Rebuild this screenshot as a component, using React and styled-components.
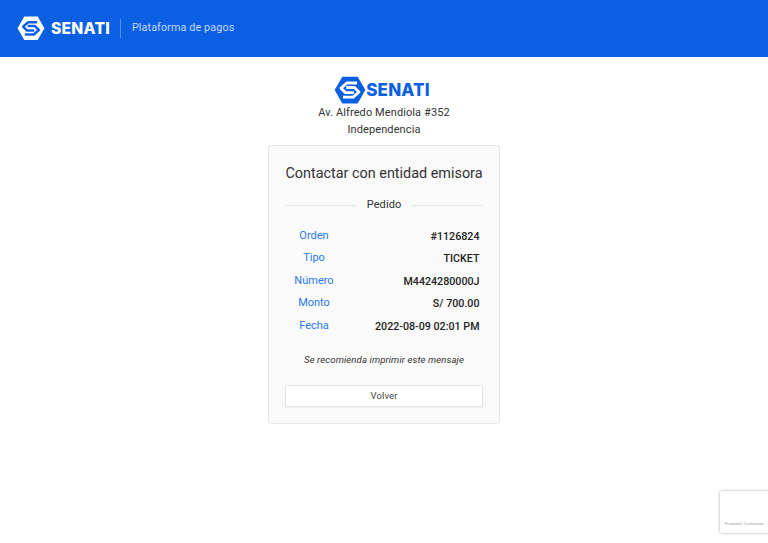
import styled, { createGlobalStyle } from "styled-components";

const GlobalStyle = createGlobalStyle`
  html, body {
    margin: 0;
    padding: 0;
    background: #fff;
    font-family: Roboto, "Liberation Sans", sans-serif;
  }
`;

const Page = styled.div`
  height: 543px;
  overflow: hidden;
  position: relative;
`;

const Header = styled.header`
  height: 57px;
  background: #0b5fe3;
  display: flex;
  align-items: center;
  padding-left: 17px;
`;

const BrandName = styled.span`
  font-family: Inter, Roboto, sans-serif;
  font-weight: 800;
  font-size: ${(p) => p.$size}px;
  letter-spacing: 0.2px;
  color: ${(p) => p.$color};
  line-height: 1;
`;

const HeaderBrand = styled.div`
  display: flex;
  align-items: center;
  gap: 6px;
`;

const Divider = styled.div`
  width: 1px;
  height: 19px;
  background: rgba(255, 255, 255, 0.3);
  margin: 0 11px 0 10px;
`;

const Tagline = styled.span`
  font-size: 10.8px;
  letter-spacing: 0.1px;
  color: #c4d8f8;
  position: relative;
  top: -1px;
`;

const Main = styled.main`
  display: flex;
  flex-direction: column;
  align-items: center;
  padding-top: 20px;
`;

const Logo = styled.div`
  display: flex;
  align-items: center;
  height: 27px;
  margin-right: 4px;
`;

const Address = styled.p`
  margin: 0;
  font-size: 11px;
  line-height: 17px;
  letter-spacing: 0.1px;
  color: #333;
  text-align: center;
`;

const Card = styled.section`
  box-sizing: border-box;
  width: 232px;
  height: 279px;
  margin-top: 7px;
  padding: 17px 16px 0;
  background: #fafafa;
  border: 1px solid #e6e6e6;
  border-radius: 3px;
`;

const Title = styled.h1`
  margin: 0;
  font-size: 14.4px;
  font-weight: 400;
  line-height: 21px;
  text-align: center;
  color: #333;
  white-space: nowrap;
`;

const Section = styled.div`
  display: flex;
  align-items: center;
  gap: 11px;
  margin-top: 13px;
  font-size: 11px;
  line-height: 16px;
  letter-spacing: 0.1px;
  color: #333;
  &::before,
  &::after {
    content: "";
    flex: 1;
    height: 1px;
    background: #e8e8e8;
  }
`;

const Rows = styled.dl`
  margin: 12px 0 0;
`;

const Row = styled.div`
  display: flex;
  justify-content: space-between;
  align-items: center;
  height: 22.5px;
  padding-right: 3.5px;
`;

const Label = styled.dt`
  width: 58px;
  text-align: center;
  font-size: 11px;
  color: #2b78f0;
  position: relative;
  top: -1px;
`;

const Value = styled.dd`
  margin: 0;
  font-size: 10.7px;
  font-weight: 500;
  color: #222;
  white-space: nowrap;
`;

const Note = styled.p`
  margin: 15px 0 0;
  font-size: 9.6px;
  line-height: 14px;
  font-style: italic;
  letter-spacing: 0.1px;
  text-align: center;
  color: #333;
`;

const BackButton = styled.button`
  display: block;
  box-sizing: border-box;
  width: 100%;
  height: 22px;
  margin-top: 18px;
  padding: 0;
  background: #fff;
  border: 1px solid #e4e4e4;
  border-radius: 2px;
  box-shadow: 0 1px 2px rgba(0, 0, 0, 0.06);
  font-family: inherit;
  font-size: 9.5px;
  letter-spacing: 0.1px;
  color: #444;
`;

const Recaptcha = styled.div`
  position: absolute;
  left: 720px;
  top: 491px;
  box-sizing: border-box;
  width: 60px;
  height: 42px;
  background: #fff;
  border-radius: 2px;
  box-shadow: 0 0 3px rgba(0, 0, 0, 0.35);
  padding: 31px 0 0 5px;
  font-size: 3.5px;
  line-height: 5px;
  color: #999;
  white-space: nowrap;
`;

const SenatiMark = ({ size, color, cut }) => (
  <svg width={size} height={size * 0.88} viewBox="0 0 50 44" aria-hidden="true">
    <polygon points="13,1 37,1 49,22 37,43 13,43 1,22" fill={color} />
    <path
      d="M36 11 H20 L11 19 L18 26 H31 M14 33 H30 L39 25 L32 18 H19"
      fill="none"
      stroke={cut}
      strokeWidth="4.5"
      strokeLinejoin="round"
    />
  </svg>
);

const rows = [
  ["Orden", "#1126824"],
  ["Tipo", "TICKET"],
  ["Número", "M4424280000J"],
  ["Monto", "S/ 700.00"],
  ["Fecha", "2022-08-09 02:01 PM"],
];

export default function App() {
  return (
    <Page>
      <GlobalStyle />
      <Header>
        <HeaderBrand>
          <SenatiMark size={28} color="#fff" cut="#0b5fe3" />
          <BrandName $size={15.7} $color="#fff">SENATI</BrandName>
        </HeaderBrand>
        <Divider />
        <Tagline>Plataforma de pagos</Tagline>
      </Header>
      <Main>
        <Logo>
          <SenatiMark size={32} color="#0b5fe3" cut="#fff" />
          <BrandName $size={17} $color="#0b5fe3">SENATI</BrandName>
        </Logo>
        <Address>Av. Alfredo Mendiola #352</Address>
        <Address>Independencia</Address>
        <Card>
          <Title>Contactar con entidad emisora</Title>
          <Section>Pedido</Section>
          <Rows>
            {rows.map(([label, value]) => (
              <Row key={label}>
                <Label>{label}</Label>
                <Value>{value}</Value>
              </Row>
            ))}
          </Rows>
          <Note>Se recomienda imprimir este mensaje</Note>
          <BackButton>Volver</BackButton>
        </Card>
      </Main>
      <Recaptcha>Privacidad - Condiciones</Recaptcha>
    </Page>
  );
}
